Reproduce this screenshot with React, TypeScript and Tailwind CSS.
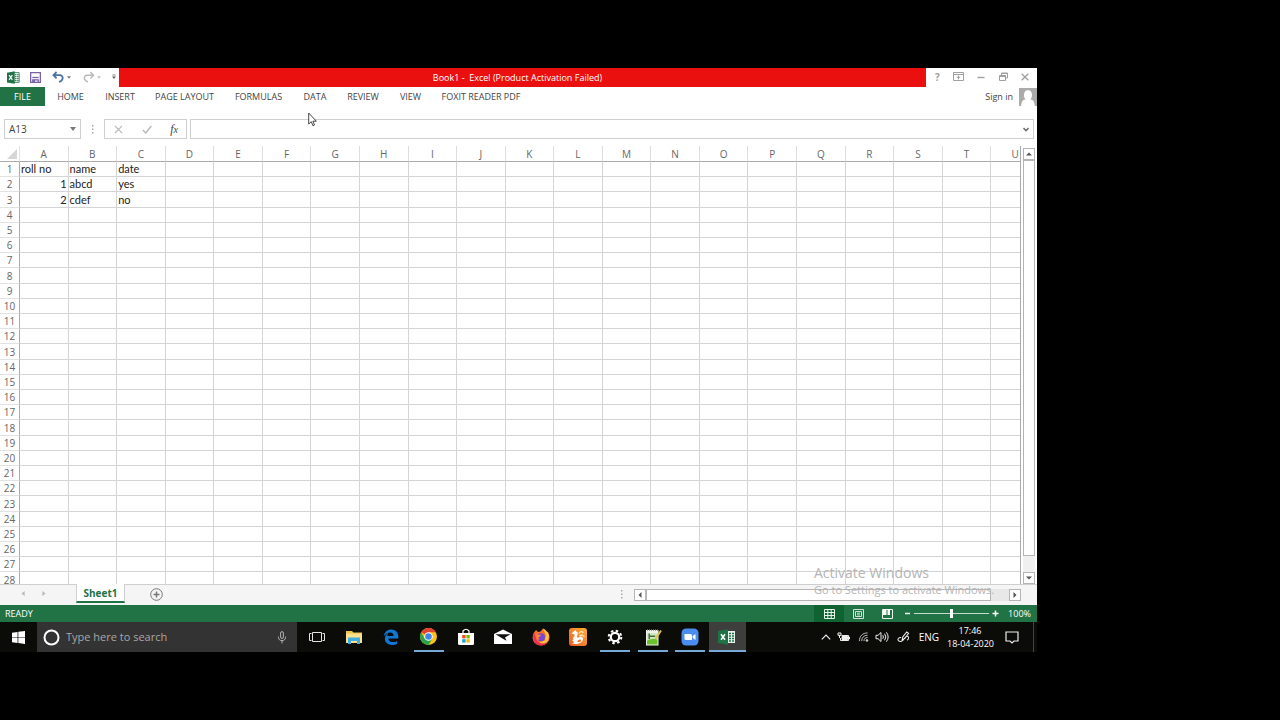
import React from "react";

type Tab = { label: string; width: string };

const tabs: Tab[] = [
  { label: "HOME", width: "w-[49px]" },
  { label: "INSERT", width: "w-[50px]" },
  { label: "PAGE LAYOUT", width: "w-[79px]" },
  { label: "FORMULAS", width: "w-[69px]" },
  { label: "DATA", width: "w-[44px]" },
  { label: "REVIEW", width: "w-[52px]" },
  { label: "VIEW", width: "w-[43px]" },
  { label: "FOXIT READER PDF", width: "w-[98px]" },
];

const columns = "ABCDEFGHIJKLMNOPQRSTU".split("");
const rows = Array.from({ length: 28 }, (_, i) => i + 1);
const data: Record<number, string[]> = {
  1: ["roll no", "name", "date"],
  2: ["1", "abcd", "yes"],
  3: ["2", "cdef", "no"],
};

function ExcelIcon({ className }: { className: string }) {
  return (
    <svg viewBox="0 0 16 16" className={className} aria-hidden="true">
      <path d="M8 2h7v12H8z" fill="#fff" stroke="#1f7246" strokeWidth="1" />
      <path d="M10 4.5h1.6M12.6 4.5h1.6M10 7h1.6M12.6 7h1.6M10 9.4h1.6M12.6 9.4h1.6M10 11.8h1.6M12.6 11.8h1.6" stroke="#1f7246" strokeWidth="1.4" />
      <path d="M0 2l9.500-1.800v15.600L0 14z" fill="#1f7246" />
      <path d="M2.600 5l4 6M6.600 5l-4 6" stroke="#fff" strokeWidth="1.500" />
    </svg>
  );
}

function TitleBar() {
  return (
    <header className="flex h-[19px] items-stretch bg-white">
      <div className="flex w-[119px] shrink-0 items-center pb-px pl-[7px]">
        <ExcelIcon className="h-[13px] w-[13px]" />
        <button aria-label="Save" className="ml-[10px]">
          <svg viewBox="0 0 12 12" className="h-[11px] w-[11px]" fill="none" stroke="#7a62a8" strokeWidth="1.4">
            <path d="M.7.7h10.6v10.6H.7z" />
            <path d="M2.500 6h7" />
            <path d="M3 11.300V8.500h6v2.800" />
            <path d="M3.500 8.500h2v2.800h-2z" fill="#7a62a8" stroke="none" />
          </svg>
        </button>
        <button aria-label="Undo" className="ml-[11px]">
          <svg viewBox="0 0 12 12" className="h-[12px] w-[12px]" fill="none" stroke="#4a70a8" strokeWidth="1.800">
            <path d="M4.600 1L1.500 4.200l3.100 3.200M1.500 4.200H7.500c4.500 0 4.200 5.200-.5 6.800" />
          </svg>
        </button>
        <svg viewBox="0 0 5 3" className="ml-[3px] h-[3px] w-[4px]"><path d="M0 0h5L2.500 3z" fill="#777" /></svg>
        <button aria-label="Redo" className="ml-[12px]">
          <svg viewBox="0 0 12 12" className="h-[12px] w-[12px]" fill="none" stroke="#b8b8b8" strokeWidth="1.500">
            <path d="M7.400 1l3.100 3.200-3.100 3.200M10.500 4.200H4.500c-4.500 0-4.200 5.200.5 6.800" />
          </svg>
        </button>
        <svg viewBox="0 0 5 3" className="ml-[2px] h-[3px] w-[4px]"><path d="M0 0h5L2.500 3z" fill="#c4c4c4" /></svg>
        <svg viewBox="0 0 5 6" className="ml-[11px] h-[6px] w-[4px]"><path d="M.5 .5h4" stroke="#666" /><path d="M0 2.500h5L2.500 5.500z" fill="#666" /></svg>
      </div>
      <h1 className="flex min-w-0 flex-1 items-center justify-center bg-[#eb1010] pr-[10px] text-[9px] whitespace-pre text-white">
        {"Book1 -  Excel (Product Activation Failed)"}
      </h1>
      <div className="flex w-[111px] shrink-0 items-center justify-between pr-[8px] pb-[2px] pl-[9px] text-[#a0a0a0]">
        <button aria-label="Help" className="text-[10px] leading-[12px] font-bold">?</button>
        <button aria-label="Ribbon display options">
          <svg viewBox="0 0 11 9" className="h-[9px] w-[11px]" fill="none" stroke="currentColor">
            <path d="M.5.5h10v8H.5zM.5 2.500h10M5.500 7.500v-4M3.700 5.300h3.600" />
          </svg>
        </button>
        <button aria-label="Minimize">
          <svg viewBox="0 0 8 9" className="h-[9px] w-[8px]"><path d="M.5 5.500h7" stroke="currentColor" strokeWidth="1.400" /></svg>
        </button>
        <button aria-label="Restore">
          <svg viewBox="0 0 9 9" className="h-[9px] w-[9px]" fill="none" stroke="currentColor">
            <path d="M.5 3.500h6v5h-6zM.5 4.500h6M2.500 3V1h6v5H6.800M2.500 1.500h6" />
          </svg>
        </button>
        <button aria-label="Close">
          <svg viewBox="0 0 8 8" className="h-[8px] w-[8px]"><path d="M.7.7l6.600 6.600M7.300.7L.7 7.300" stroke="currentColor" strokeWidth="1.400" /></svg>
        </button>
      </div>
    </header>
  );
}

function Ribbon() {
  return (
    <nav className="flex h-[19px] items-stretch bg-white text-[9px] text-[#444]">
      <button className="w-[45px] shrink-0 bg-[#217346] text-white">FILE</button>
      <div className="ml-px flex">
        {tabs.map((t) => (
          <button key={t.label} className={`${t.width} whitespace-nowrap`}>{t.label}</button>
        ))}
      </div>
      <button className="ml-auto flex items-center gap-[6px]">
        Sign in
        <svg viewBox="0 0 18 18" className="h-[18px] w-[18px]" aria-hidden="true">
          <path d="M0 0h18v18H0z" fill="#ababab" />
          <path d="M9 2.300c5.500 0 4.600 8.200 2 9 3 .4 4.600 2.200 4.800 6.700H2.200C2.400 13.500 4 11.700 7 11.300c-2.600-.8-3.500-9 2-9z" fill="#fff" />
        </svg>
      </button>
    </nav>
  );
}

function FormulaBar() {
  return (
    <div className="flex h-[20px] items-stretch pr-[3px] pl-[4px] text-[10px] text-[#444]">
      <div className="flex w-[77px] items-center border border-[#cfcfcf] pr-[4px] pl-[4px]">
        <input aria-label="Name box" defaultValue="A13" className="w-0 min-w-0 flex-1 bg-transparent outline-none" />
        <svg viewBox="0 0 6 4" className="h-[4px] w-[6px]"><path d="M0 0h6L3 4z" fill="#777" /></svg>
      </div>
      <div className="flex w-[23px] items-center justify-center">
        <svg viewBox="0 0 2 9" className="h-[9px] w-[2px]"><path d="M0 0h1.500v1.500H0zM0 3.500h1.500V5H0zM0 7h1.500v1.500H0z" fill="#aaa" /></svg>
      </div>
      <div className="flex w-[83px] items-center justify-between border border-[#cfcfcf] pr-[8px] pl-[9px]">
        <button aria-label="Cancel"><svg viewBox="0 0 9 9" className="h-[9px] w-[9px]"><path d="M1 1l7 7M8 1L1 8" stroke="#bdbdbd" strokeWidth="1.200" /></svg></button>
        <button aria-label="Enter"><svg viewBox="0 0 10 9" className="h-[9px] w-[10px]"><path d="M.8 5l3 3L9.300 1" stroke="#bdbdbd" strokeWidth="1.600" fill="none" /></svg></button>
        <button aria-label="Insert function" className="font-['Liberation_Serif',serif] text-[12px] leading-[14px] italic">
          f<span className="text-[10px]">x</span>
        </button>
      </div>
      <div className="ml-[3px] flex flex-1 items-center border border-[#cfcfcf] pr-[4px]">
        <input aria-label="Formula" className="min-w-0 flex-1 bg-transparent px-1 outline-none" />
        <svg viewBox="0 0 6 5" className="h-[5px] w-[6px]"><path d="M.5 1L3 3.700 5.500 1" fill="none" stroke="#666" strokeWidth="1.500" /></svg>
      </div>
    </div>
  );
}

function Arrow({ d, label }: { d: string; label: string }) {
  return (
    <button aria-label={label} className="flex h-[12px] w-[12px] shrink-0 items-center justify-center border border-[#b5b5b5] bg-white">
      <svg viewBox="0 0 6 6" className="h-[6px] w-[6px]"><path d={d} fill="#555" /></svg>
    </button>
  );
}

function Sheet() {
  return (
    <div className="flex h-[438px] bg-white">
      <div className="min-w-0 flex-1 overflow-hidden border-r border-[#ababab]">
        <table className="h-[442px] w-[calc(100%+20px)] table-fixed border-separate border-spacing-0 text-[#222]">
          <thead>
            <tr className="h-[16px] text-[10px] leading-[14px] text-[#666]">
              <th className="w-[20px] border-r border-b border-[#ababab] border-r-[#e2e2e2] p-0">
                <svg viewBox="0 0 10 10" className="ml-[7px] h-[10px] w-[10px]"><path d="M10 0v10H0z" fill="#d6d6d6" /></svg>
              </th>
              {columns.map((c) => (
                <th key={c} scope="col" className="border-r border-b border-[#ababab] border-r-[#dedede] p-0 font-normal">{c}</th>
              ))}
            </tr>
          </thead>
          <tbody>
            {rows.map((r) => (
              <tr key={r} className="leading-[12px]">
                <th scope="row" className="border-r border-b border-[#ababab] border-b-[#e2e2e2] p-0 text-[10px] font-normal text-[#666]">{r}</th>
                {columns.map((c, i) => {
                  const value = data[r]?.[i] ?? "";
                  return (
                    <td
                      key={c}
                      className={`border-r border-b border-[#d4d4d4] px-px py-0 font-['Lato',sans-serif] text-[11px] whitespace-nowrap ${/^\d+$/.test(value) ? "text-right" : "text-left"}`}
                    >
                      {value}
                    </td>
                  );
                })}
              </tr>
            ))}
          </tbody>
        </table>
      </div>
      <div className="flex w-[16px] shrink-0 flex-col items-center pt-[2px]">
        <Arrow label="Scroll up" d="M0 4.500h6L3 1.500z" />
        <div className="w-[12px] flex-1 bg-[#f0f0f0] pb-[16px]">
          <div className="h-full border border-[#b5b5b5] bg-white" />
        </div>
        <Arrow label="Scroll down" d="M0 1.500h6L3 4.500z" />
      </div>
    </div>
  );
}

function SheetTabs() {
  return (
    <div className="flex h-[21px] items-stretch border-t border-[#cfcfcf] bg-[#f5f5f5]">
      <div className="flex w-[76px] items-center gap-[17px] pb-[3px] pl-[21px]">
        <button aria-label="Previous sheet"><svg viewBox="0 0 4 6" className="h-[5px] w-[4px]"><path d="M4 0v6L0 3z" fill="#bbb" /></svg></button>
        <button aria-label="Next sheet"><svg viewBox="0 0 4 6" className="h-[5px] w-[4px]"><path d="M0 0v6l4-3z" fill="#bbb" /></svg></button>
      </div>
      <button className="-mt-px mb-[2px] w-[49px] border-x border-b-2 border-x-[#cfcfcf] border-b-[#217346] bg-white text-[10px] leading-[14px] font-bold text-[#217346]">Sheet1</button>
      <button aria-label="New sheet" className="ml-[25px] pb-[2px]">
        <svg viewBox="0 0 13 13" className="h-[13px] w-[13px]" fill="none" stroke="#777">
          <circle cx="6.500" cy="6.500" r="5.800" />
          <path d="M6.500 3.500v6M3.500 6.500h6" strokeWidth="1.500" />
        </svg>
      </button>
      <div className="ml-auto flex w-[416px] items-center pr-[16px] pb-px">
        <svg viewBox="0 0 2 9" className="mr-[11px] h-[9px] w-[2px]"><path d="M0 0h1.500v1.500H0zM0 3.500h1.500V5H0zM0 7h1.500v1.500H0z" fill="#aaa" /></svg>
        <Arrow label="Scroll left" d="M4.500 0v6L1.500 3z" />
        <div className="h-[12px] flex-1 bg-[#e8e8e8] pr-[18px]">
          <div className="h-full border border-[#b5b5b5] bg-white" />
        </div>
        <Arrow label="Scroll right" d="M1.500 0v6L4.500 3z" />
      </div>
    </div>
  );
}

function StatusBar() {
  return (
    <div className="flex h-[17px] items-center bg-[#217346] pl-[5px] text-[9px] text-white">
      <span>READY</span>
      <div className="ml-auto flex h-full items-center">
        <button aria-label="Normal view" className="flex h-full w-[30px] items-center justify-center bg-[#0f6331]">
          <svg viewBox="0 0 11 10" className="h-[10px] w-[11px]" fill="none" stroke="#e8f3ec"><path d="M.5.5h10v9H.5zM.5 3.500h10M.5 6.500h10M3.800.5v9M7.200.5v9" /></svg>
        </button>
        <button aria-label="Page layout view" className="flex w-[29px] items-center justify-center">
          <svg viewBox="0 0 11 10" className="h-[10px] w-[11px]" fill="none" stroke="#cfe3d7"><path d="M.5.5h10v9H.5zM2.500 2.500h6v5h-6zM4 4.200h3M4 5.900h3" /></svg>
        </button>
        <button aria-label="Page break view" className="flex w-[29px] items-center justify-center">
          <svg viewBox="0 0 11 10" className="h-[10px] w-[11px]"><path d="M.5.5h10v9H.5z" fill="none" stroke="#e8f3ec" /><path d="M1 0h3.500v6H1zM5.500 0H8v6H5.500z" fill="#fff" /></svg>
        </button>
        <button aria-label="Zoom out" className="ml-[2px]"><svg viewBox="0 0 7 7" className="h-[7px] w-[7px]"><path d="M1 3.500h5" stroke="#fff" strokeWidth="1.500" /></svg></button>
        <input
          type="range"
          aria-label="Zoom"
          defaultValue={50}
          className="mx-[3px] h-[9px] w-[75px] appearance-none bg-transparent [&::-webkit-slider-runnable-track]:h-px [&::-webkit-slider-runnable-track]:bg-[#c4dccd] [&::-webkit-slider-thumb]:-mt-[4px] [&::-webkit-slider-thumb]:h-[9px] [&::-webkit-slider-thumb]:w-[3px] [&::-webkit-slider-thumb]:appearance-none [&::-webkit-slider-thumb]:bg-white"
        />
        <button aria-label="Zoom in"><svg viewBox="0 0 7 7" className="h-[7px] w-[7px]"><path d="M.5 3.500h6M3.500.5v6" stroke="#fff" strokeWidth="1.500" /></svg></button>
        <span className="w-[38px] pr-[6px] text-right">100%</span>
      </div>
    </div>
  );
}

const apps: { name: string; open?: boolean; active?: boolean; icon: React.ReactNode }[] = [
  {
    name: "Task View",
    icon: <svg viewBox="0 0 16 16" className="h-4 w-4" fill="none" stroke="#e4e4e4"><path d="M3.500 3.500h9v9h-9zM2.500 4.500h-2v7h2M13.500 4.500h2v7h-2" /></svg>,
  },
  {
    name: "File Explorer",
    icon: (
      <svg viewBox="0 0 18 16" className="h-4 w-[18px]">
        <path d="M1 2h6l1.500 1.500H17V14H1z" fill="#f0c24e" />
        <path d="M1 4.500h16V14H1z" fill="#fbe08d" />
        <path d="M3 8.500h12V15h-3v-3H6v3H3z" fill="#42aee0" />
      </svg>
    ),
  },
  {
    name: "Edge",
    icon: (
      <svg viewBox="0 0 16 16" className="h-4 w-4">
        <path d="M.7 7.300C1.500 2.800 4.500.4 8.200.4c4.600 0 7.100 3.200 7.100 7.300v1.700H5.400c.2 4.200 5.600 4.500 8.700 2.500v3c-4.900 2.500-12.600.8-12.200-5.500.2-2.800 1.900-4.500 3.600-5.300-.8.900-1.100 1.800-1.200 2.800h6.300C10.600 2.100 4.200 2.600.7 7.300z" fill="#0f78d4" />
      </svg>
    ),
  },
  {
    name: "Chrome",
    open: true,
    icon: (
      <svg viewBox="0 0 16 16" className="h-[17px] w-[17px]">
        <circle cx="8" cy="8" r="8" fill="#fbc116" />
        <path d="M8 8L1.100 4A8 8 0 0 1 14.900 4H8z" fill="#df4334" />
        <path d="M1.100 4A8 8 0 0 0 8 16l3.500-6H4.500z" fill="#2aa14f" />
        <circle cx="8" cy="8" r="4" fill="#fff" />
        <circle cx="8" cy="8" r="3.100" fill="#4285e8" />
      </svg>
    ),
  },
  {
    name: "Store",
    icon: (
      <svg viewBox="0 0 18 18" className="h-[18px] w-[18px]">
        <path d="M6 5V3q3-3.500 6 0v2" fill="none" stroke="#fff" strokeWidth="1.200" />
        <path d="M1 5h16v10.500q0 1.500-1.500 1.500h-13Q1 17 1 15.500z" fill="#fff" />
        <path d="M5.200 7h3.400v3.400H5.200z" fill="#e94e25" />
        <path d="M9.400 7h3.400v3.400H9.400z" fill="#80b900" />
        <path d="M5.200 11.200h3.400v3.400H5.200z" fill="#0e9fe4" />
        <path d="M9.400 11.200h3.400v3.400H9.400z" fill="#fbb800" />
      </svg>
    ),
  },
  {
    name: "Mail",
    icon: (
      <svg viewBox="0 0 18 16" className="h-4 w-[18px]">
        <path d="M0 5l9-4.500L18 5v10H0z" fill="#fff" />
        <path d="M1.500 5.200h15L11 8.500l1.500 3.300L8.500 9.500z" fill="#111" />
      </svg>
    ),
  },
  {
    name: "Firefox",
    icon: (
      <svg viewBox="0 0 18 18" className="h-[18px] w-[18px]">
        <path d="M2 4.500L4 2l2 2 2.500-.4L11 .5c2 1.200 3 2.400 3.500 3.800l1.200-.5C20 10 16 17.500 9 17.500S-1.500 11 2 4.500z" fill="#f9702c" />
        <path d="M11 .5c5 3 6 5.500 5.800 9-.3 3.500-3.300 6-6.800 6l-3-1 6-2 1-5z" fill="#fdc63b" />
        <path d="M2 4.500C-.5 11 3 17.500 9 17.500c2.500 0 4.500-1 6-2.500-7 2-10.500-1.500-11-5z" fill="#ee2f52" />
        <circle cx="9" cy="9.300" r="4" fill="#7a45d8" />
        <path d="M4 6.500l5 .2-1.300 2.100c-1.700.2-1.700 2.200.4 2.500L5 11.800z" fill="#fa8b2e" />
      </svg>
    ),
  },
  {
    name: "UC Browser",
    icon: (
      <svg viewBox="0 0 18 18" className="h-[18px] w-[18px]">
        <defs>
          <linearGradient id="uc" x1="0" y1="1" x2="1" y2="0">
            <stop offset="0" stopColor="#ee5a24" />
            <stop offset="1" stopColor="#fbb233" />
          </linearGradient>
        </defs>
        <rect width="18" height="18" rx="3" fill="url(#uc)" />
        <path d="M2.500 5.500L5 3.200 6.500 2l.6 1.600C9 4.200 9.300 5.600 8.300 7.200 7.500 8.500 8 9.600 9.300 9.800c1.500-2.300 4.500-1.500 4.700.7.200 2.600-2.200 4.700-5 5.300-2.500.4-5 .2-6.500-.6 2 0 2.700-.7 2.200-1.500L3 12l2-.6L3.800 10l1.400-1.300.5-2.200z" fill="#fff" />
        <path d="M8.300 13.800c.5-2.200 3.700-3 3.800-1.300 0 1.200-1.600 1.900-3.800 1.300z" fill="#f47b25" />
        <path d="M10 5.500c1-2.300 3.200-2.300 4.300-.7M10.500 8c1.200-1.500 3.800-1.200 4.800 1" fill="none" stroke="#ffe8c8" strokeWidth="1.300" />
      </svg>
    ),
  },
  {
    name: "Settings",
    open: true,
    icon: (
      <svg viewBox="0 0 16 16" className="h-4 w-4" fill="none" stroke="#fff">
        <circle cx="8" cy="8" r="4.200" strokeWidth="2.200" />
        <circle cx="8" cy="8" r="6.300" strokeWidth="2" strokeDasharray="2.470 2.478" />
      </svg>
    ),
  },
  {
    name: "Notepad++",
    open: true,
    icon: (
      <svg viewBox="0 0 18 18" className="h-[18px] w-[18px]">
        <path d="M2 2h12.500v15.500H2z" fill="#eef3ea" />
        <path d="M3 5h10.500v7H3z" fill="#d3e6c8" />
        <path d="M3 12.500q5-3 10.500-1v5H3z" fill="#6cc22e" />
        <path d="M5.200 5.500v5.500M5.200 8.200h6" stroke="#3c6e34" strokeWidth="1.400" />
        <path d="M3 2.200h11" stroke="#999" strokeDasharray="1 1" strokeWidth="1.500" />
        <path d="M17 2.500L11.500 11" stroke="#dfc04a" strokeWidth="2" />
      </svg>
    ),
  },
  {
    name: "Zoom",
    open: true,
    icon: (
      <svg viewBox="0 0 18 18" className="h-[18px] w-[18px]">
        <rect x=".5" y=".5" width="17" height="17" rx="4.500" fill="#4a8cf0" />
        <path d="M3.500 6h6q1.500 0 1.500 1.500V12H5q-1.500 0-1.500-1.500zM11.700 8l2.800-2v6l-2.800-2z" fill="#fff" />
      </svg>
    ),
  },
  {
    name: "Excel",
    open: true,
    active: true,
    icon: (
      <svg viewBox="0 0 18 16" className="h-4 w-[18px]">
        <path d="M10 2h7v12h-7z" fill="#e9f2ec" />
        <path d="M11 4.500h2M14 4.500h2M11 7h2M14 7h2M11 9.500h2M14 9.500h2M11 12h2M14 12h2" stroke="#1f7246" strokeWidth="1.500" />
        <path d="M0 2l10-1.800v15.600L0 14z" fill="#1f7246" />
        <path d="M3 5.200l4 5.600M7 5.200l-4 5.600" stroke="#fff" strokeWidth="1.500" />
      </svg>
    ),
  },
];

function Taskbar() {
  return (
    <footer className="flex h-[30px] items-stretch bg-[#0b0b07] text-white">
      <button aria-label="Start" className="flex w-[37px] shrink-0 items-center justify-center">
        <svg viewBox="0 0 14 14" className="h-[13px] w-[13px]"><path d="M0 2l6-1v5.600H0zM6.800.9L14 0v6.600H6.800zM0 7.400h6V13l-6-1zM6.800 7.400H14V14l-7.200-1z" fill="#fff" /></svg>
      </button>
      <label className="flex w-[260px] shrink-0 items-center bg-[#333] pr-[10px] pl-[6px]">
        <svg viewBox="0 0 17 17" className="h-[17px] w-[17px]"><circle cx="8.500" cy="8.500" r="7" fill="none" stroke="#fff" strokeWidth="2" /></svg>
        <input aria-label="Search" placeholder="Type here to search" className="ml-[6px] min-w-0 flex-1 bg-transparent text-[11px] outline-none placeholder:text-[#a8a8a8]" />
        <svg viewBox="0 0 10 14" className="h-[13px] w-[10px]" fill="none" stroke="#bdbdbd"><rect x="3.500" y=".7" width="3" height="7.300" rx="1.500" /><path d="M1.200 6v1c0 4.500 7.600 4.500 7.600 0V6M5 10.500v2.800" /></svg>
      </label>
      <div className="ml-px flex w-[448px] shrink-0">
        {apps.map((a) => (
          <button key={a.name} aria-label={a.name} className={`flex flex-1 flex-col items-center ${a.active ? "bg-[#3e3e3c]" : ""}`}>
            <span className="flex flex-1 items-center pt-px">{a.icon}</span>
            <span className={`h-[2px] ${a.active ? "w-full" : "w-[30px]"} ${a.open ? "bg-[#76a9d8]" : ""}`} />
          </button>
        ))}
      </div>
      <div className="ml-auto flex items-center">
        <svg viewBox="0 0 10 6" className="h-[6px] w-[10px]"><path d="M.8 5.300L5 1.100l4.200 4.200" fill="none" stroke="#eee" strokeWidth="1.200" /></svg>
        <svg viewBox="0 0 13 10" className="ml-[6px] h-[10px] w-[13px]" fill="none" stroke="#eee"><path d="M4.500 3.500h7v5h-8V6M12.500 4.800v2.400" /><path d="M5 4.500h5.500V7.500H5z" fill="#eee" /><path d="M1 1h3v2.300H1zM2.500 3v3" /></svg>
        <svg viewBox="0 0 11 11" className="ml-[8px] h-[10px] w-[11px]" fill="none" stroke="#ccc"><path d="M1 10C1 4.500 4.500 1 10 1M3.500 10C3.500 6 6 3.500 10 3.500M6 10c0-2.500 1.500-4 4-4" /><circle cx="9.300" cy="9.300" r="1" fill="#ddd" /></svg>
        <svg viewBox="0 0 14 12" className="ml-[6px] h-[12px] w-[14px]" fill="none" stroke="#eee"><path d="M1 4.300h2L6 1.500v9L3 7.700H1zM7.800 4.200q1.200 1.800 0 3.600M9.600 2.700q2.500 3.300 0 6.600M11.400 1.300q3.500 4.700 0 9.400" /></svg>
        <svg viewBox="0 0 14 14" className="ml-[8px] h-[13px] w-[13px]" fill="none" stroke="#eee" strokeWidth="1.100"><path d="M5.500 9.500l.8-3.200L10.500 1l2 1.600-4 5.300zM4.500 7C2 6.600.2 8.500 1.500 10.300c1.200 1.600 3.600 1.400 5-.3s2.500-4.500 4.500-4.300 2 3-.2 4.300" /></svg>
        <button className="ml-[9px] text-[10px]">ENG</button>
        <div className="ml-[8px] w-[46px] text-center text-[9px] leading-[13px] whitespace-nowrap">17:46<br />18-04-2020</div>
        <button aria-label="Notifications" className="ml-[12px]">
          <svg viewBox="0 0 14 13" className="h-[13px] w-[14px]" fill="none" stroke="#eee"><path d="M1 1h12v9H9l-2 2-2-2H1z" strokeWidth="1.200" /></svg>
        </button>
        <div className="mr-[3px] ml-[14px] h-[30px] w-px bg-[#444]" />
      </div>
    </footer>
  );
}

export default function App() {
  return (
    <div className="min-h-screen bg-black pt-[68px] pr-[243px] font-['Open_Sans',sans-serif]">
      <main className="relative bg-white">
        <TitleBar />
        <Ribbon />
        <div className="pt-[13px] pb-[7px]">
          <FormulaBar />
        </div>
        <Sheet />
        <SheetTabs />
        <StatusBar />
        <Taskbar />
        <div className="pointer-events-none absolute right-[43px] bottom-[55px] w-[180px] whitespace-nowrap text-[#b4b4b4]">
          <p className="text-[14px] leading-[20px]">Activate Windows</p>
          <p className="text-[11px] leading-[14px]">Go to Settings to activate Windows.</p>
        </div>
        <svg viewBox="0 0 9 15" className="pointer-events-none absolute top-[44px] left-[308px] h-[15px] w-[9px]" aria-hidden="true">
          <path d="M.7 1v11l2.600-2.300 1.600 4 1.600-.7-1.600-3.800h3.400z" fill="#fff" stroke="#333" strokeWidth=".9" />
        </svg>
      </main>
    </div>
  );
}
